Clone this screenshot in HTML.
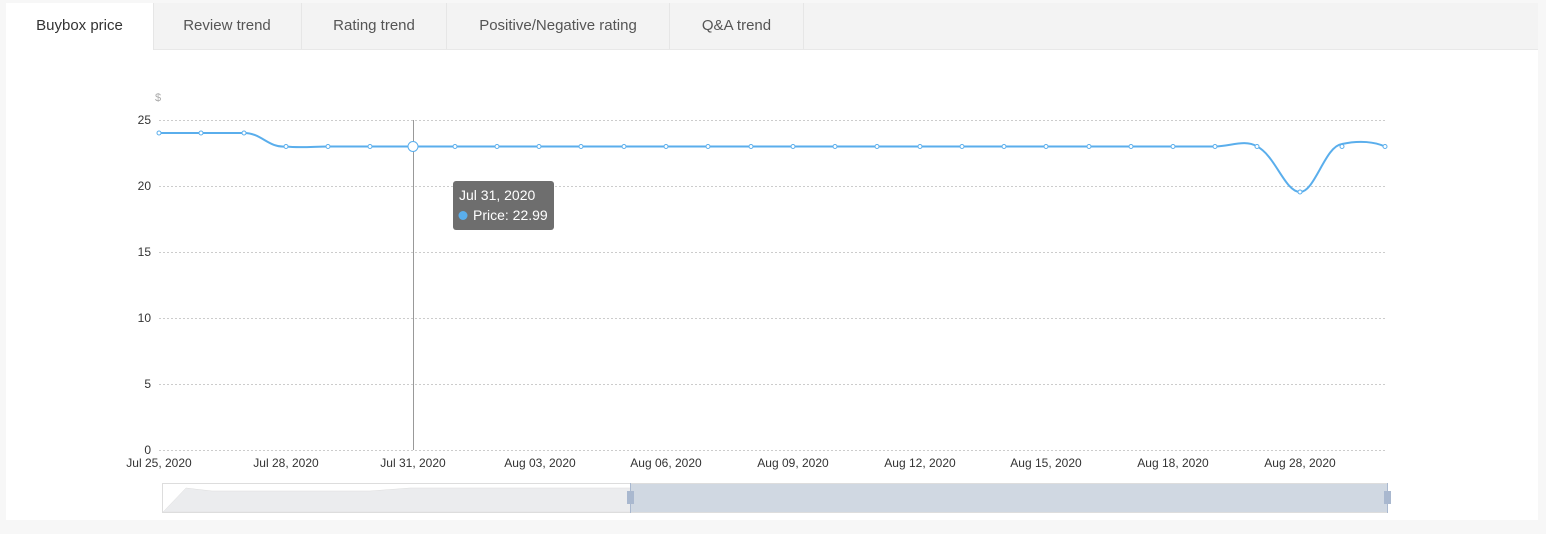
<!DOCTYPE html>
<html><head><meta charset="utf-8"><style>
body{margin:0;background:#f7f7f7;width:1546px;height:534px;overflow:hidden;font-family:"Liberation Sans",sans-serif}
.card{position:absolute;left:6px;top:3px;width:1532px;height:517px;background:#fff}
.tabs{position:absolute;left:0;top:0;width:1532px;height:46px;background:#f3f3f3;border-bottom:1px solid #e8e8e8}
.tab{position:absolute;top:0;height:46px;line-height:46px;text-align:center;font-size:15px;color:#555;border-right:1px solid #e6e6e6}
.tab.a{background:#fff;color:#333;height:47px}
</style></head><body>
<div class="card">
<div class="tabs">
<div class="tab a" style="left:0;width:147px">Buybox price</div>
<div class="tab" style="left:147px;width:148px">Review trend</div>
<div class="tab" style="left:296px;width:144px">Rating trend</div>
<div class="tab" style="left:441px;width:222px">Positive/Negative rating</div>
<div class="tab" style="left:664px;width:133px">Q&amp;A trend</div>
</div>
</div>
<svg width="1546" height="534" style="position:absolute;left:0;top:0" font-family="Liberation Sans, sans-serif">
<text x="155" y="101" font-size="11" fill="#aaa">$</text>
<g stroke="#ccc" stroke-dasharray="2,2" stroke-width="1">
<line x1="159" x2="1385" y1="120.5" y2="120.5"/><line x1="159" x2="1385" y1="186.5" y2="186.5"/>
<line x1="159" x2="1385" y1="252.5" y2="252.5"/><line x1="159" x2="1385" y1="318.5" y2="318.5"/>
<line x1="159" x2="1385" y1="384.5" y2="384.5"/><line x1="159" x2="1385" y1="450.5" y2="450.5"/>
</g>
<g font-size="12" fill="#333" text-anchor="end">
<text x="151" y="124">25</text><text x="151" y="190">20</text><text x="151" y="256">15</text>
<text x="151" y="322">10</text><text x="151" y="388">5</text><text x="151" y="454">0</text>
</g>
<g font-size="12" fill="#333" text-anchor="middle">
<text x="159" y="467">Jul 25, 2020</text><text x="286" y="467">Jul 28, 2020</text><text x="413" y="467">Jul 31, 2020</text>
<text x="540" y="467">Aug 03, 2020</text><text x="666" y="467">Aug 06, 2020</text><text x="793" y="467">Aug 09, 2020</text>
<text x="920" y="467">Aug 12, 2020</text><text x="1046" y="467">Aug 15, 2020</text><text x="1173" y="467">Aug 18, 2020</text>
<text x="1300" y="467">Aug 28, 2020</text>
</g>
<line x1="413.5" x2="413.5" y1="120" y2="450" stroke="#999"/>
<path d="M159,133 L244,133 C262,133 268,148 286,146.5 C300,148 314,146.5 328,146.5 L1215,146.5 C1230,146.5 1245,139 1257,146.5 C1275,155 1285,192 1300,192 C1315,192 1325,146 1342,144 C1360,140 1375,142 1385,146.5" fill="none" stroke="#5aaeec" stroke-width="2"/>
<g fill="#fff" stroke="#5aaeec" stroke-width="1">
<circle cx="159" cy="133" r="2"/><circle cx="201" cy="133" r="2"/><circle cx="244" cy="133" r="2"/>
<circle cx="286" cy="146.5" r="2"/><circle cx="328" cy="146.5" r="2"/><circle cx="370" cy="146.5" r="2"/>
<circle cx="455" cy="146.5" r="2"/><circle cx="497" cy="146.5" r="2"/><circle cx="539" cy="146.5" r="2"/>
<circle cx="581" cy="146.5" r="2"/><circle cx="624" cy="146.5" r="2"/><circle cx="666" cy="146.5" r="2"/>
<circle cx="708" cy="146.5" r="2"/><circle cx="751" cy="146.5" r="2"/><circle cx="793" cy="146.5" r="2"/>
<circle cx="835" cy="146.5" r="2"/><circle cx="877" cy="146.5" r="2"/><circle cx="920" cy="146.5" r="2"/>
<circle cx="962" cy="146.5" r="2"/><circle cx="1004" cy="146.5" r="2"/><circle cx="1046" cy="146.5" r="2"/>
<circle cx="1089" cy="146.5" r="2"/><circle cx="1131" cy="146.5" r="2"/><circle cx="1173" cy="146.5" r="2"/>
<circle cx="1215" cy="146.5" r="2"/><circle cx="1257" cy="146.5" r="2"/><circle cx="1300" cy="192" r="2"/>
<circle cx="1342" cy="146.5" r="2"/><circle cx="1385" cy="146.5" r="2"/>
<circle cx="413" cy="146.5" r="5"/>
</g>
<rect x="453" y="181" width="101" height="49" rx="3" fill="#6e6e6e"/>
<text x="459" y="200" font-size="14" fill="#fff">Jul 31, 2020</text>
<circle cx="463" cy="215.5" r="4.5" fill="#5aaeec"/>
<text x="473" y="220" font-size="14" fill="#fff">Price: 22.99</text>
<rect x="162.5" y="483.5" width="1225" height="29" fill="#fff" stroke="#ddd"/>
<path d="M163,512 L186,488 L212,491 L370,491 L410,488 L1385,488 L1385,512Z" fill="#ebecee" stroke="#ddd" stroke-width="0.5"/>
<rect x="630" y="484" width="757" height="28" fill="#d0d8e2"/>
<line x1="630.5" x2="630.5" y1="483" y2="513" stroke="#a9b8cf"/>
<line x1="1387.5" x2="1387.5" y1="483" y2="513" stroke="#a9b8cf"/>
<rect x="627" y="491" width="7" height="13" fill="#a9b8cf"/>
<rect x="1384" y="491" width="7" height="13" fill="#a9b8cf"/>
</svg>
</body></html>
